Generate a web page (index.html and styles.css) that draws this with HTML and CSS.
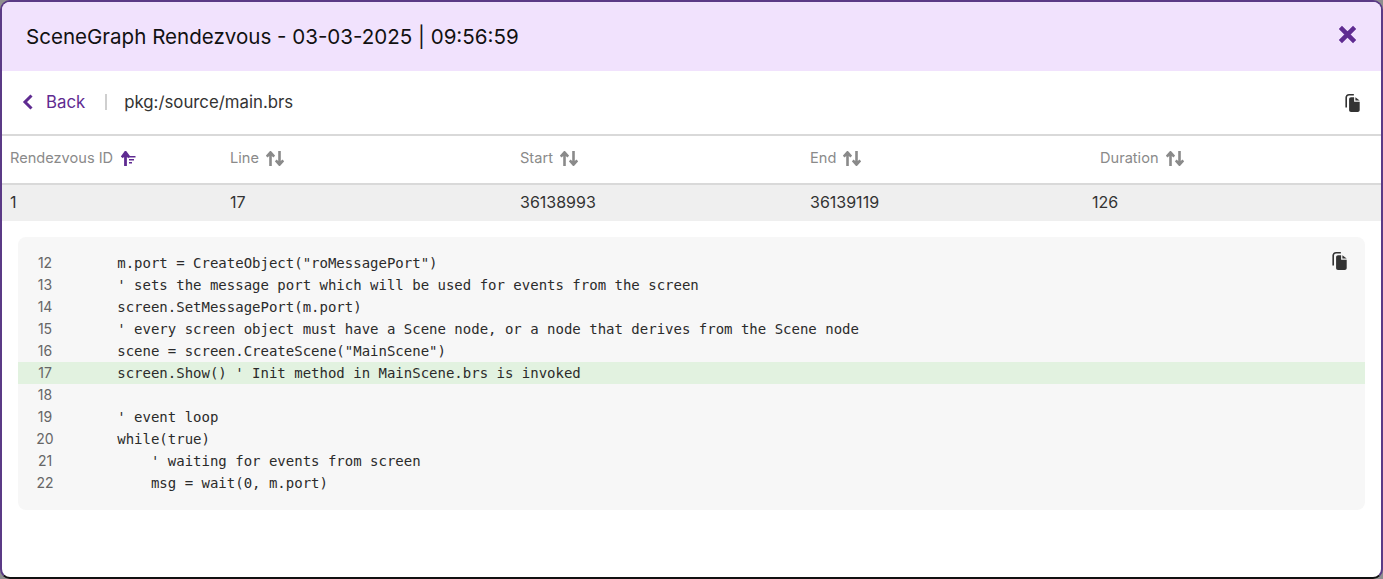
FILE: index.html
```html
<!DOCTYPE html>
<html lang="en">
<head>
<meta charset="utf-8">
<title>SceneGraph Rendezvous</title>
<link rel="stylesheet" href="styles.css">
</head>
<body>
<svg class="defs" width="0" height="0" aria-hidden="true">
  <symbol id="copy" viewBox="0 0 16 20">
    <path d="M1 15V4C1 2 2.2 .9 4.2 .9H9.5" fill="none" stroke="currentColor" stroke-width="1.8"/>
    <path d="M4.2 6C4.2 4.6 5 3.6 6.4 3.6H9.8V8.6H16V17.8C16 19.2 15.1 20 13.8 20H6.4C5 20 4.2 19.2 4.2 17.8Z" fill="currentColor"/>
    <path d="M11.2 3.6L16 7.2H11.2Z" fill="currentColor"/>
  </symbol>
  <symbol id="sort" viewBox="0 0 18 15">
    <path d="M4.5 15V2M.8 5.6L4.5 1.4L8.2 5.6" fill="none" stroke="currentColor" stroke-width="2.6"/>
    <path d="M13.5 0V13M9.8 9.4L13.5 13.6L17.2 9.4" fill="none" stroke="currentColor" stroke-width="2.6"/>
  </symbol>
</svg>
<div class="modal">
  <header class="title-bar">
    <h1 class="title">SceneGraph Rendezvous - 03-03-2025 | 09:56:59</h1>
    <svg class="close" viewBox="0 0 16 16" aria-label="Close"><path d="M2 2L14 14M14 2L2 14" stroke="currentColor" stroke-width="3.8" fill="none"/></svg>
  </header>
  <div class="path-bar">
    <a class="back">
      <svg class="chevron" viewBox="0 0 11 16"><path d="M9 1.5L2.5 8L9 14.5" stroke="currentColor" stroke-width="3" fill="none"/></svg>
      <span>Back</span>
    </a>
    <span class="divider"></span>
    <span class="file-path">pkg:/source/main.brs</span>
    <svg class="copy copy-top"><use href="#copy"/></svg>
  </div>
  <div class="table-head">
    <div class="th">Rendezvous ID
      <svg class="sort-active" viewBox="0 0 15 15"><path d="M4.5 15V2.5M.8 6.4L4.5 1.4L8.2 6.4" stroke="currentColor" stroke-width="2.8" fill="none"/><path d="M8 5.8H14.5M8 8.8H13M8 11.8H11" stroke="currentColor" stroke-width="1.6" fill="none"/></svg>
    </div>
    <div class="th">Line <svg class="sort"><use href="#sort"/></svg></div>
    <div class="th">Start <svg class="sort"><use href="#sort"/></svg></div>
    <div class="th">End <svg class="sort"><use href="#sort"/></svg></div>
    <div class="th">Duration <svg class="sort"><use href="#sort"/></svg></div>
  </div>
  <div class="table-row">
    <div>1</div>
    <div>17</div>
    <div>36138993</div>
    <div>36139119</div>
    <div>126</div>
  </div>
  <section class="code">
    <svg class="copy copy-code"><use href="#copy"/></svg>
    <div class="line"><span class="num">12</span><code>    m.port = CreateObject("roMessagePort")</code></div>
    <div class="line"><span class="num">13</span><code>    ' sets the message port which will be used for events from the screen</code></div>
    <div class="line"><span class="num">14</span><code>    screen.SetMessagePort(m.port)</code></div>
    <div class="line"><span class="num">15</span><code>    ' every screen object must have a Scene node, or a node that derives from the Scene node</code></div>
    <div class="line"><span class="num">16</span><code>    scene = screen.CreateScene("MainScene")</code></div>
    <div class="line current"><span class="num">17</span><code>    screen.Show() ' Init method in MainScene.brs is invoked</code></div>
    <div class="line"><span class="num">18</span><code></code></div>
    <div class="line"><span class="num">19</span><code>    ' event loop</code></div>
    <div class="line"><span class="num">20</span><code>    while(true)</code></div>
    <div class="line"><span class="num">21</span><code>        ' waiting for events from screen</code></div>
    <div class="line"><span class="num">22</span><code>        msg = wait(0, m.port)</code></div>
  </section>
</div>
</body>
</html>
```
FILE: styles.css
```css
* { box-sizing: border-box; }
html, body { margin: 0; height: 100%; background: #8f8f8f; overflow: hidden; }
.defs { position: absolute; }
body { font-family: "Inter", "Liberation Sans", sans-serif; color: #222; }
.modal {
  height: 579px;
  background: #fff;
  border: 2px solid #5b3a86;
  border-bottom: 2px solid #111;
  border-radius: 10px;
  overflow: hidden;
}
.title-bar {
  height: 69px;
  background: #f1e2fd;
  display: flex;
  align-items: center;
  justify-content: space-between;
  padding: 0 24px 0 24px;
}
.title { margin: 0; font-size: 20.55px; font-weight: 400; color: #111; }
.close { width: 19px; height: 19px; color: #5f2b91; margin-top: -5px; }
.path-bar {
  height: 65px;
  display: flex;
  align-items: center;
  padding: 0 21px 2px 20px;
  border-bottom: 2px solid #d9d9d9;
  font-size: 16.8px;
}
.back { display: flex; align-items: center; color: #5f2b91; gap: 12px; }
.chevron { width: 12px; height: 16px; }
.divider { width: 2px; height: 16px; background: #cfcfcf; margin: 0 17px 0 20px; }
.file-path { color: #333; flex: 1; }
.copy { width: 15px; height: 18px; color: #333; }
.copy-top { margin-top: 3px; }
.table-head, .table-row { display: grid; padding-left: 8px; }
.table-head {
  grid-template-columns: 220px 290px 290px 290px 1fr;
  height: 49px;
  align-items: center;
  padding-bottom: 3px;
  border-bottom: 2px solid #d9d9d9;
  font-size: 14.6px;
  color: #8a8a8a;
}
.th { display: flex; align-items: center; gap: 6px; }
.sort { width: 18px; height: 15px; margin-left: 1px; color: #8a8a8a; }
.sort-active { width: 15px; height: 15px; margin-left: 2px; color: #5f2b91; }
.table-row {
  grid-template-columns: 220px 290px 290px 282px 1fr;
  height: 36px;
  align-items: center;
  padding-bottom: 2px;
  background: #efefef;
  font-size: 16px;
  color: #333;
}
.code {
  position: relative;
  margin: 16px 16px 0;
  width: 1347px;
  height: 273px;
  padding-top: 15px;
  background: #f7f7f7;
  border-radius: 8px;
}
.copy-code { position: absolute; top: 15px; right: 18px; }
.line { display: flex; height: 22px; align-items: center; }
.current { background: #e2f2e0; }
.num { width: 54px; margin-right: 11.5px; padding-bottom: 2px; text-align: center; font-size: 14px; color: #666; }
code { font-family: "DejaVu Sans Mono", monospace; font-size: 14px; color: #2b2b2b; white-space: pre; }
```
